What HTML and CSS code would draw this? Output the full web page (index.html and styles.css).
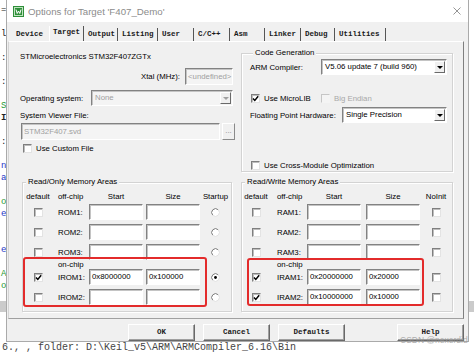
FILE: index.html
```html
<!DOCTYPE html>
<html lang="en">
<head>
    <meta charset="UTF-8">
    <meta name="viewport" content="width=device-width, initial-scale=1.0">
    <title>Options for Target 'F407_Demo'</title>
    <link rel="stylesheet" href="styles.css">
</head>
<body>
    <div class="editor">
        <div class="ln">=</div>
        <div class="ln"></div>
        <div class="ln">l:</div>
        <div class="ln"></div>
        <div class="ln">:</div>
        <div class="ln"></div>
        <div class="ln">:</div>
        <div class="ln"></div>
        <div class="ln cm">S</div>
        <div class="ln strong">I</div>
        <div class="ln"></div>
        <div class="ln">:</div>
        <div class="ln"></div>
        <div class="ln kw">n</div>
        <div class="ln kw">a</div>
        <div class="ln"></div>
        <div class="ln cm">o</div>
        <div class="ln kw">e</div>
        <div class="ln"></div>
        <div class="ln"></div>
        <div class="ln kw">e</div>
        <div class="ln"></div>
        <div class="ln cm">A</div>
        <div class="ln cm">o</div>
    </div>
    <div class="band"></div>
    <div class="cmdline">6., , folder: D:\Keil_v5\ARM\ARMCompiler_6.16\Bin</div>

    <div class="dialog">
        <div class="titlebar">
            <svg class="app-icon" width="11" height="11" viewBox="0 0 11 11">
                <rect x="0" y="0" width="11" height="11" fill="#2f8f3a"/>
                <rect x="1.5" y="1.5" width="8" height="8" fill="none" stroke="#bfe3bf" stroke-width="1"/>
                <path d="M3 3.5 L4.2 7.5 L5.5 5 L6.8 7.5 L8 3.5" fill="none" stroke="#fff" stroke-width="1"/>
            </svg>
            <span class="title">Options for Target 'F407_Demo'</span>
            <svg class="close" width="8" height="8" viewBox="0 0 8 8">
                <path d="M0.5 0.5 L7.5 7.5 M7.5 0.5 L0.5 7.5" stroke="#8a8a8a" stroke-width="0.9"/>
            </svg>
        </div>

        <div class="tabs">
            <span class="tab t-device">Device</span>
            <span class="tab t-target active">Target</span>
            <span class="tab t-output">Output</span>
            <span class="tab t-listing">Listing</span>
            <span class="tab t-user">User</span>
            <span class="tab t-cc">C/C++</span>
            <span class="tab t-asm">Asm</span>
            <span class="tab t-linker">Linker</span>
            <span class="tab t-debug">Debug</span>
            <span class="tab t-util">Utilities</span>
        </div>

        <div class="panel">
            <div class="top">
                <div class="device">
                    <div class="chip-name">STMicroelectronics STM32F407ZGTx</div>
                    <div class="row xtal">
                        <span>Xtal (MHz):</span>
                        <span class="field off">&lt;undefined&gt;</span>
                    </div>
                    <div class="row os">
                        <span>Operating system:</span>
                        <div class="select off"><span class="val">None</span><span class="drop"><i></i></span></div>
                    </div>
                    <div class="svf-label">System Viewer File:</div>
                    <div class="row svd">
                        <span class="field off">STM32F407.svd</span>
                        <span class="browse">...</span>
                    </div>
                    <div class="row check custom"><span class="cb"></span>Use Custom File</div>
                </div>

                <div class="group codegen">
                    <div class="group-title">Code Generation</div>
                    <div class="row arm">
                        <span>ARM Compiler:</span>
                        <div class="select"><span class="val">V5.06 update 7 (build 960)</span><span class="drop"><i></i></span></div>
                    </div>
                    <div class="row libs">
                        <span class="check microlib"><span class="cb"><svg viewBox="0 0 7 7"><path d="M1 3.4 L2.8 5.4 L6.2 1.3"/></svg></span>Use MicroLIB</span>
                        <span class="check off"><span class="cb"></span>Big Endian</span>
                    </div>
                    <div class="row fph">
                        <span>Floating Point Hardware:</span>
                        <div class="select"><span class="val">Single Precision</span><span class="drop"><i></i></span></div>
                    </div>
                    <div class="row check cross"><span class="cb"></span>Use Cross-Module Optimization</div>
                </div>
            </div>

            <div class="memory">
                <div class="group mem rom">
                    <div class="group-title">Read/Only Memory Areas</div>
                    <div class="mrow mhead"><span>default</span><span class="lbl">off-chip</span><span class="c">Start</span><span class="c">Size</span><span>Startup</span></div>
                    <div class="mrow first"><span class="cb"></span><span class="lbl">ROM1:</span><span class="field"></span><span class="field"></span>
                        <svg class="radio" viewBox="0 0 9 9"><circle cx="4.5" cy="4.5" r="3.8" fill="#fff"/><path d="M7.2 1.8 A3.8 3.8 0 0 0 1.8 7.2" fill="none" stroke="#7a7a7a"/><path d="M1.8 7.2 A3.8 3.8 0 0 0 7.2 1.8" fill="none" stroke="#e2e2e2"/></svg></div>
                    <div class="mrow"><span class="cb"></span><span class="lbl">ROM2:</span><span class="field"></span><span class="field"></span>
                        <svg class="radio" viewBox="0 0 9 9"><circle cx="4.5" cy="4.5" r="3.8" fill="#fff"/><path d="M7.2 1.8 A3.8 3.8 0 0 0 1.8 7.2" fill="none" stroke="#7a7a7a"/><path d="M1.8 7.2 A3.8 3.8 0 0 0 7.2 1.8" fill="none" stroke="#e2e2e2"/></svg></div>
                    <div class="mrow"><span class="cb"></span><span class="lbl">ROM3:</span><span class="field"></span><span class="field"></span>
                        <svg class="radio" viewBox="0 0 9 9"><circle cx="4.5" cy="4.5" r="3.8" fill="#fff"/><path d="M7.2 1.8 A3.8 3.8 0 0 0 1.8 7.2" fill="none" stroke="#7a7a7a"/><path d="M1.8 7.2 A3.8 3.8 0 0 0 7.2 1.8" fill="none" stroke="#e2e2e2"/></svg></div>
                    <div class="mrow onchip"><span></span><span class="lbl">on-chip</span></div>
                    <div class="mrow chip1"><span class="cb"><svg viewBox="0 0 7 7"><path d="M1 3.4 L2.8 5.4 L6.2 1.3"/></svg></span><span class="lbl">IROM1:</span><span class="field">0x8000000</span><span class="field">0x100000</span>
                        <svg class="radio" viewBox="0 0 9 9"><circle cx="4.5" cy="4.5" r="3.8" fill="#fff"/><path d="M7.2 1.8 A3.8 3.8 0 0 0 1.8 7.2" fill="none" stroke="#7a7a7a"/><path d="M1.8 7.2 A3.8 3.8 0 0 0 7.2 1.8" fill="none" stroke="#e2e2e2"/><circle cx="4.5" cy="4.5" r="1.4" fill="#000"/></svg></div>
                    <div class="mrow"><span class="cb"></span><span class="lbl">IROM2:</span><span class="field"></span><span class="field"></span>
                        <svg class="radio" viewBox="0 0 9 9"><circle cx="4.5" cy="4.5" r="3.8" fill="#fff"/><path d="M7.2 1.8 A3.8 3.8 0 0 0 1.8 7.2" fill="none" stroke="#7a7a7a"/><path d="M1.8 7.2 A3.8 3.8 0 0 0 7.2 1.8" fill="none" stroke="#e2e2e2"/></svg></div>
                    <div class="mark"></div>
                </div>

                <div class="group mem ram">
                    <div class="group-title">Read/Write Memory Areas</div>
                    <div class="mrow mhead"><span>default</span><span class="lbl">off-chip</span><span class="c">Start</span><span class="c">Size</span><span>NoInit</span></div>
                    <div class="mrow first"><span class="cb"></span><span class="lbl">RAM1:</span><span class="field"></span><span class="field"></span><span class="cb"></span></div>
                    <div class="mrow"><span class="cb"></span><span class="lbl">RAM2:</span><span class="field"></span><span class="field"></span><span class="cb"></span></div>
                    <div class="mrow"><span class="cb"></span><span class="lbl">RAM3:</span><span class="field"></span><span class="field"></span><span class="cb"></span></div>
                    <div class="mrow onchip"><span></span><span class="lbl">on-chip</span></div>
                    <div class="mrow chip1"><span class="cb"><svg viewBox="0 0 7 7"><path d="M1 3.4 L2.8 5.4 L6.2 1.3"/></svg></span><span class="lbl">IRAM1:</span><span class="field">0x20000000</span><span class="field">0x20000</span><span class="cb"></span></div>
                    <div class="mrow"><span class="cb"><svg viewBox="0 0 7 7"><path d="M1 3.4 L2.8 5.4 L6.2 1.3"/></svg></span><span class="lbl">IRAM2:</span><span class="field">0x10000000</span><span class="field">0x10000</span><span class="cb"></span></div>
                    <div class="mark"></div>
                </div>
            </div>
        </div>

        <div class="buttons">
            <div class="btn">OK</div>
            <div class="btn">Cancel</div>
            <div class="btn">Defaults</div>
            <div class="btn help">Help</div>
        </div>
    </div>
    <div class="watermark">CSDN @nexerdid</div>
</body>
</html>
```

FILE: styles.css
```css
* {
    box-sizing: border-box;
}
body {
    margin: 0;
    width: 474px;
    height: 353px;
    overflow: hidden;
    position: relative;
    background: #fff;
    font-family: "Liberation Sans", Arial, sans-serif;
    font-size: 7.8px;
    color: #000;
}

/* editor window behind the dialog */
.editor {
    height: 301px;
    padding-top: 4px;
    overflow: hidden;
    font-family: "Liberation Mono", monospace;
    font-size: 9px;
    line-height: 12px;
    color: #222;
}
.ln {
    height: 12px;
    padding-left: 1px;
}
.ln.kw {
    color: #2436c8;
}
.ln.cm {
    color: #1f9a35;
}
.ln.strong {
    font-weight: bold;
}
.band {
    height: 11px;
    background: #cbcbcb;
}
.cmdline {
    margin-top: 31px;
    padding-left: 2px;
    font-family: "Liberation Mono", monospace;
    font-size: 10px;
    line-height: 10px;
    color: #444;
    white-space: nowrap;
}
.watermark {
    position: absolute;
    left: 400px;
    top: 335px;
    font-size: 8.5px;
    color: rgba(150, 150, 150, 0.75);
}

/* dialog */
.dialog {
    position: absolute;
    left: 6px;
    top: 0;
    width: 463px;
    height: 342px;
    display: flex;
    flex-direction: column;
    background: #f0f0f0;
    border: 1px solid #aaa;
    border-top: 0;
    overflow: hidden;
}
.titlebar {
    flex: none;
    height: 22px;
    display: flex;
    align-items: center;
    padding-left: 6px;
    background: #fff;
}
.app-icon {
    flex: none;
    margin-top: 1px;
}
.title {
    margin-left: 4px;
    font-size: 9.7px;
    color: #8c8c8c;
}
.close {
    margin-left: auto;
    margin-right: 7px;
}

.tabs {
    flex: none;
    height: 19px;
    display: flex;
    align-items: flex-end;
    padding-left: 5px;
    font-family: "Liberation Mono", monospace;
    font-size: 7.5px;
    font-weight: bold;
    color: #1a1a1a;
}
.tab {
    height: 13px;
    line-height: 13px;
    padding-left: 4px;
    border-right: 1px solid #555;
    white-space: nowrap;
}
.tab.active {
    height: 15px;
    padding-bottom: 2px;
    border-left: 1px solid #fff;
    padding-left: 3px;
}
.t-device { width: 37px; border-right: 0; }
.t-target { width: 35px; }
.t-output { width: 34px; }
.t-listing { width: 40px; }
.t-user { width: 36px; }
.t-cc { width: 36px; }
.t-asm { width: 35px; }
.t-linker { width: 36px; }
.t-debug { width: 34px; }
.t-util { width: 51px; }

.panel {
    flex: none;
    height: 278px;
    width: 456px;
    margin-left: 1px;
    padding: 6px 9px 0 11px;
    border: 1px solid;
    border-color: #fff #7f7f7f #a0a0a0 #d4d4d4;
}

.row {
    display: flex;
    align-items: center;
}
.top {
    display: flex;
    gap: 6px;
}
.device {
    width: 215px;
    padding-top: 1px;
}
.chip-name {
    height: 16px;
    line-height: 16px;
}
.xtal {
    margin-top: 3px;
    height: 17px;
    justify-content: flex-end;
    gap: 5px;
    padding-right: 2px;
}
.xtal .field {
    width: 48px;
    height: 17px;
    line-height: 15px;
}
.os {
    margin-top: 5px;
    height: 16px;
    justify-content: space-between;
    padding-right: 2px;
}
.os .select {
    width: 142px;
}
.svf-label {
    margin-top: 3px;
    height: 13px;
    line-height: 13px;
}
.svd {
    margin-top: 1px;
    height: 17px;
    gap: 2px;
    padding-left: 1px;
}
.svd .field {
    width: 199px;
    height: 17px;
    line-height: 15px;
}
.browse {
    width: 13px;
    height: 17px;
    line-height: 13px;
    text-align: center;
    color: #8a8a8a;
    background: #f0f0f0;
    border: 1px solid;
    border-color: #fff #8a8a8a #8a8a8a #fff;
}
.check {
    display: flex;
    align-items: center;
    gap: 4px;
}
.custom {
    margin-top: 3px;
    height: 10px;
    padding-left: 3px;
}

/* controls */
.field {
    display: block;
    height: 16px;
    width: 54px;
    padding-left: 2px;
    line-height: 14px;
    white-space: nowrap;
    overflow: hidden;
    background: #fff;
    border: 1px solid;
    border-color: #828282 #fff #fff #828282;
    box-shadow: inset 1px 1px 0 #c4c4c4;
}
.field.off {
    background: #f4f4f4;
    color: #a0a0a0;
}
.select {
    display: flex;
    height: 16px;
    background: #fff;
    border: 1px solid;
    border-color: #828282 #fff #fff #828282;
    box-shadow: inset 1px 1px 0 #c4c4c4;
}
.select .val {
    flex: 1;
    padding-left: 3px;
    line-height: 14px;
    white-space: nowrap;
}
.drop {
    width: 11px;
    margin: 1px 1px 1px 0;
    display: flex;
    align-items: center;
    justify-content: center;
    background: #f0f0f0;
    border: 1px solid;
    border-color: #fff #6a6a6a #6a6a6a #fff;
}
.drop i {
    width: 0;
    height: 0;
    border-left: 3px solid transparent;
    border-right: 3px solid transparent;
    border-top: 3px solid #000;
}
.select.off {
    background: #f4f4f4;
    color: #a0a0a0;
}
.select.off .drop i {
    border-top-color: #a0a0a0;
}
.cb {
    flex: none;
    display: inline-flex;
    align-items: center;
    justify-content: center;
    width: 9px;
    height: 9px;
    background: #fff;
    border: 1px solid;
    border-color: #7f7f7f #e3e3e3 #e3e3e3 #7f7f7f;
    box-shadow: inset 1px 1px 0 #bdbdbd;
}
.cb svg {
    width: 7px;
    height: 7px;
}
.cb path {
    fill: none;
    stroke: #000;
    stroke-width: 1.5;
}
.check.off {
    color: #a8a8a8;
}
.check.off .cb {
    background: #f4f4f4;
    border-color: #c6c6c6 #f4f4f4 #f4f4f4 #c6c6c6;
    box-shadow: none;
}
.radio {
    width: 9px;
    height: 9px;
}

/* group boxes */
.group {
    border: 1px solid #d3d3d3;
    box-shadow: inset 1px 1px 0 #fff, 1px 1px 0 #fff;
}
.group-title {
    width: fit-content;
    height: 10px;
    margin: -6px 0 0 3px;
    padding: 0 2px;
    line-height: 10px;
    background: #f0f0f0;
}
.codegen {
    width: 212px;
    margin-top: 5px;
    padding: 0 5px 0 8px;
}
.arm {
    margin-top: 1px;
    height: 16px;
    justify-content: space-between;
}
.arm .select {
    width: 126px;
}
.libs {
    margin-top: 17px;
    height: 12px;
    padding-left: 1px;
}
.microlib {
    width: 70px;
}
.fph {
    margin-top: 3px;
    height: 16px;
    justify-content: space-between;
}
.fph .select {
    width: 105px;
}
.cross {
    margin-top: 37px;
    height: 11px;
    padding-left: 1px;
}

/* memory areas */
.memory {
    display: flex;
    gap: 9px;
    margin-top: 10px;
    padding-left: 2px;
}
.mem {
    position: relative;
    padding-bottom: 6px;
}
.rom {
    width: 210px;
}
.ram {
    width: 212px;
}
.mrow {
    display: grid;
    height: 16px;
    margin-top: 4px;
    align-items: center;
}
.rom .mrow {
    grid-template-columns: 30px 36px 57px 54px 31px;
}
.ram .mrow {
    grid-template-columns: 28px 37px 59px 54px 32px;
}
.mrow .cb,
.mrow .radio {
    justify-self: center;
}
.mhead {
    height: 10px;
    margin-top: 5px;
    line-height: 10px;
    text-align: center;
}
.mhead .c {
    width: 54px;
}
.mrow.first {
    margin-top: 2px;
}
.lbl {
    padding-left: 5px;
    text-align: left;
}
.ram .lbl {
    padding-left: 7px;
}
.onchip {
    height: 9px;
    margin-top: 0;
    line-height: 9px;
}
.mrow.chip1 {
    margin-top: 0;
}
.mark {
    position: absolute;
    border: 2px solid #e32b2b;
    border-radius: 3px;
}
.rom .mark {
    left: 0;
    top: 74px;
    width: 184px;
    height: 50px;
}
.ram .mark {
    left: 5px;
    top: 75px;
    width: 177px;
    height: 48px;
}

/* buttons */
.buttons {
    flex: none;
    display: flex;
    gap: 8px;
    padding: 5px 4px 0 121px;
}
.btn {
    width: 67px;
    height: 17px;
    line-height: 15px;
    text-align: center;
    font-family: "Liberation Mono", monospace;
    font-size: 7.5px;
    font-weight: bold;
    color: #1a1a1a;
    background: #f0f0f0;
    border: 1px solid;
    border-color: #fff #696969 #696969 #fff;
    box-shadow: inset -1px -1px 0 #a0a0a0;
}
.help {
    margin-left: auto;
}
```
